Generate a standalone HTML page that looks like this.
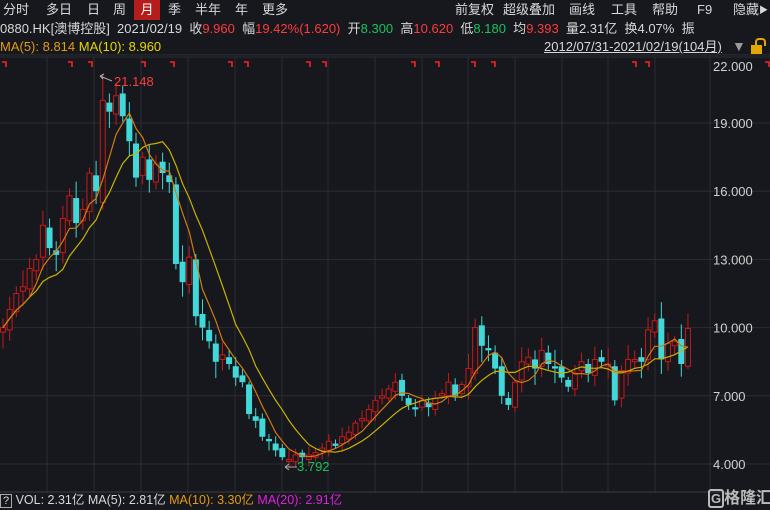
<!DOCTYPE html>
<html><head><meta charset="utf-8"><style>
body{margin:0;width:770px;height:509px;overflow:hidden;background:#16181d;font-family:"Liberation Sans","Noto Sans CJK SC",sans-serif;color:#d8d8d8;position:relative}
.t{position:absolute;white-space:nowrap;font-size:13px}
.tabs span{position:absolute;top:0;height:20px;line-height:20px;font-size:13px;color:#d8d8d8}
.r{color:#ff3b3b}.g{color:#19c35a}.o{color:#e49a12}.y{color:#e6d600}.m{color:#e01fe0}
</style></head><body>
<div class="tabs">
<span style="left:3px">分时</span><span style="left:46px">多日</span><span style="left:87px">日</span><span style="left:113px">周</span>
<span style="left:134px;width:26px;background:#b51c1c;text-align:center;color:#fff">月</span>
<span style="left:168px">季</span><span style="left:195px">半年</span><span style="left:235px">年</span><span style="left:262px">更多</span>
<span style="left:455px">前复权</span><span style="left:503px">超级叠加</span><span style="left:569px">画线</span><span style="left:611px">工具</span><span style="left:652px">帮助</span><span style="left:697px">F9</span><span style="left:733px">隐藏<span style="font-size:9px">▶</span></span>
</div>
<div class="t" style="left:0;top:20px;height:18px;line-height:18px">0880.HK[澳博控股] &nbsp;2021/02/19 &nbsp;收<span class="r">9.960</span> &nbsp;幅<span class="r">19.42%(1.620)</span> &nbsp;开<span class="g">8.300</span> &nbsp;高<span class="r">10.620</span> &nbsp;低<span class="g">8.180</span> &nbsp;均<span class="r">9.393</span> &nbsp;量2.31亿 &nbsp;换4.07% &nbsp;振</div>
<div class="t" style="left:0;top:38px;height:18px;line-height:18px"><span class="o">MA(5): 8.814</span> <span class="y">MA(10): 8.960</span></div>
<div class="t" style="left:544px;top:38px;height:18px;line-height:18px;text-decoration:underline">2012/07/31-2021/02/19(104月)</div>
<div class="t" style="left:732px;top:38px;color:#999;font-size:14px">▼</div>
<div style="position:absolute;left:751px;top:45px;width:11px;height:9px;background:#e0a800"></div>
<div style="position:absolute;left:755px;top:38px;width:7px;height:6px;border:2px solid #e0a800;border-bottom:none;border-radius:4px 4px 0 0"></div>
<svg id="c" width="770" height="509" style="position:absolute;left:0;top:0"></svg>
<div class="t" style="left:0;top:492px;height:17px;line-height:17px;font-size:12.5px"><span style="border:1px solid #aaa;padding:0 2px;font-size:11px">?</span> VOL: 2.31亿 MA(5): 2.81亿 <span class="o">MA(10): 3.30亿</span> <span class="m">MA(20): 2.91亿</span></div>
<div class="t" style="left:708px;top:484px;font-size:16px;font-weight:bold;color:#bbb"><span style="border:2px solid #bbb;border-radius:3px;padding:0 1px;font-size:13px">G</span>格隆汇</div>
<script>
var C=[10.0,10.8,11.5,11.8,12.6,13.0,14.5,13.5,13.2,14.8,15.8,14.6,15.2,16.8,16.0,20.0,19.5,20.2,19.3,18.2,16.6,17.5,16.5,17.2,16.8,16.4,12.8,12.0,13.1,10.5,10.0,9.4,8.5,8.8,8.4,7.8,7.6,6.2,5.9,5.2,5.0,4.6,4.3,4.2,4.4,4.3,4.4,4.5,4.7,5.0,4.8,5.2,5.4,5.8,6.0,6.4,6.8,7.0,7.3,7.6,7.0,6.6,6.4,6.8,6.5,6.9,7.1,7.6,7.0,7.5,8.2,10.0,9.2,9.0,8.2,7.0,6.6,7.6,8.5,8.7,8.2,9.0,8.4,8.2,7.8,7.4,8.0,8.5,8.0,8.6,8.5,8.4,6.8,8.1,8.6,8.6,8.5,9.9,10.3,8.6,9.3,9.4,8.4,9.96];
var Y=function(p){return 464-(p-4)*22.73},X=function(i){return 3+i*6.65};
var s='';
var gx=[47,94,141,188,235,282,328,375,422,468,515,562,608,655];
gx.forEach(function(x){s+='<line x1="'+x+'" y1="57" x2="'+x+'" y2="492" stroke="#2a2d33"/>'});
s+='<line x1="710" y1="57" x2="710" y2="492" stroke="#2a2d33"/>';
[22,19,16,13,10,7,4].forEach(function(p){var y=Y(p);s+='<line x1="0" y1="'+y+'" x2="770" y2="'+y+'" stroke="#2a2d33"/>';s+='<text x="713" y="'+(p==22?71:y+5)+'" fill="#d0d0d0" font-size="13" font-family="Liberation Sans">'+p.toFixed(3)+'</text>'});
s+='<line x1="0" y1="492" x2="770" y2="492" stroke="#3a3d44"/><line x1="0" y1="57" x2="770" y2="57" stroke="#2a2d33"/>';
[2,68,88,141,170,228,244,306,322,411,435,471,491,632,645,765].forEach(function(x){s+='<path d="M'+x+' 62h4v5" stroke="#ff2020" stroke-width="1.6" fill="none"/>'});
var wk=[0.5,0.7,0.4,0.9,0.6,0.3,0.8,0.5];
for(var i=0;i<C.length;i++){var c=C[i],o=i?C[i-1]+(i%3==0?0.1:-0.1):9.8;if(i==15)o=15.5;if(i==71)o=8.0;if(i==97)o=8.6;if(i==103)o=8.3;
var hi=Math.max(o,c)+wk[i%8]*(c>8?0.8:0.45),lo=Math.min(o,c)-wk[(i+3)%8]*(c>8?0.8:0.45);if(i==15)hi=21.148;if(i==43)lo=3.792;if(i==103){hi=10.62;lo=8.18}
var x=X(i),up=c>=o,col=up?'#c81818':'#40d8d8';var yt=Y(Math.max(o,c)),yb=Y(Math.min(o,c));if(yb-yt<2)yb=yt+2;
s+='<line x1="'+x+'" y1="'+Y(hi)+'" x2="'+x+'" y2="'+Y(lo)+'" stroke="'+col+'"/>';
if(up)s+='<rect x="'+(x-2.5)+'" y="'+yt+'" width="5" height="'+(yb-yt)+'" fill="#16181d" stroke="'+col+'"/>';
else s+='<rect x="'+(x-3)+'" y="'+yt+'" width="6" height="'+(yb-yt)+'" fill="'+col+'"/>';}
function ma(n,col){var d='';for(var i=0;i<C.length;i++){var a=0,k=0;for(var j=Math.max(0,i-n+1);j<=i;j++){a+=C[j];k++}d+=(i?'L':'M')+X(i).toFixed(1)+' '+Y(a/k).toFixed(1)}s+='<path d="'+d+'" stroke="'+col+'" fill="none" stroke-width="1.2"/>'}
ma(10,'#c9b300');ma(5,'#d27a10');
s+='<text x="114" y="86" fill="#ff3b3b" font-size="13" font-family="Liberation Sans">21.148</text><path d="M100 76l12 5M100 76l4-2M100 76l3 3" stroke="#aaa" fill="none"/>';
s+='<text x="297" y="471" fill="#19c35a" font-size="13" font-family="Liberation Sans">3.792</text><path d="M285 467h12M285 467l4-3M285 467l4 3" stroke="#aaa" fill="none"/>';
document.getElementById('c').innerHTML=s;
</script>
</body></html>
